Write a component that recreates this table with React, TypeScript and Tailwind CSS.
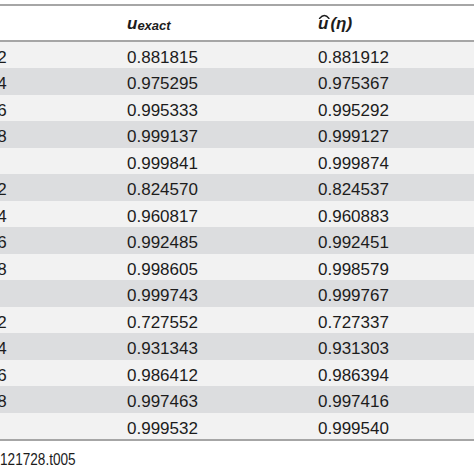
const rows: [string, string, string][] = [
  ["0.2", "0.881815", "0.881912"],
  ["0.4", "0.975295", "0.975367"],
  ["0.6", "0.995333", "0.995292"],
  ["0.8", "0.999137", "0.999127"],
  ["1", "0.999841", "0.999874"],
  ["0.2", "0.824570", "0.824537"],
  ["0.4", "0.960817", "0.960883"],
  ["0.6", "0.992485", "0.992451"],
  ["0.8", "0.998605", "0.998579"],
  ["1", "0.999743", "0.999767"],
  ["0.2", "0.727552", "0.727337"],
  ["0.4", "0.931343", "0.931303"],
  ["0.6", "0.986412", "0.986394"],
  ["0.8", "0.997463", "0.997416"],
  ["1", "0.999532", "0.999540"],
];

function HatU() {
  return (
    <span className="relative inline-block">
      u
      <svg
        className="absolute left-[0px] top-[-2px] h-[6px] w-[12px]"
        viewBox="0 0 12 6"
        fill="none"
        stroke="#1c1c1c"
        strokeWidth="1.3"
        strokeLinecap="round"
      >
        <path d="M1.5 5.5 Q6.5 -0.5 11 5.5" />
      </svg>
    </span>
  );
}

export default function App() {
  return (
    <div className="h-[474px] w-[474px] overflow-hidden bg-white font-['Liberation_Sans',Arial,sans-serif] text-[17px] text-[#1c1c1c]">
      <div className="mt-[3.5px] border-y-2 border-[#a6a6a6]">
        <div className="grid h-[34px] grid-cols-[127px_191px_1fr] pt-[9px] leading-[17px]">
          <div />
          <div className="font-bold italic">
            u<sub className="relative top-[1px] align-baseline text-[13px]">exact</sub>
          </div>
          <div className="font-bold italic">
            <HatU />
            <span className="ml-[2px]">(η)</span>
          </div>
        </div>
      </div>

      {rows.map((r, i) => (
        <div
          key={i}
          className={
            "grid h-[26.53px] grid-cols-[127px_191px_1fr] pt-[7px] leading-[17px] " +
            (i % 2 === 0 ? "bg-[#f2f2f2]" : "bg-[#dcdddf]")
          }
        >
          <div className="ml-[-17px] whitespace-nowrap">{r[0]}</div>
          <div>{r[1]}</div>
          <div>{r[2]}</div>
        </div>
      ))}

      <div className="border-t-2 border-[#a6a6a6]" />

      <div className="mt-[10px] origin-left scale-x-[0.8] whitespace-nowrap text-[17px] leading-[17px]">
        121728.t005
      </div>
    </div>
  );
}
